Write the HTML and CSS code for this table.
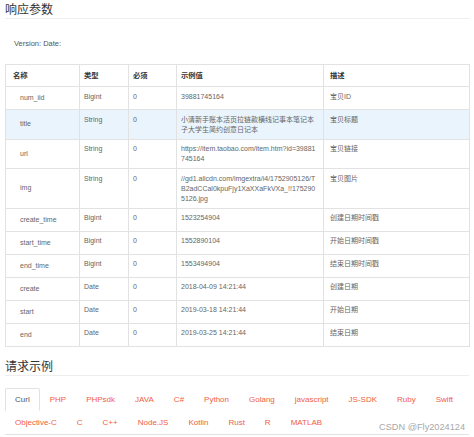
FILE: index.html
```html
<!DOCTYPE html>
<html lang="zh">
<head>
<meta charset="utf-8">
<title>响应参数</title>
<link rel="stylesheet" href="styles.css">
</head>
<body>
<div class="page">
  <h2 class="sec-title">响应参数</h2>
  <p class="version">Version: Date:</p>
  <table class="params">
    <colgroup>
      <col class="c-name"><col class="c-type"><col class="c-req"><col class="c-ex"><col class="c-desc">
    </colgroup>
    <thead>
      <tr><th>名称</th><th>类型</th><th>必须</th><th>示例值</th><th class="desc">描述</th></tr>
    </thead>
    <tbody>
      <tr><td class="name">num_iid</td><td>Bigint</td><td>0</td><td>39881745164</td><td class="desc">宝贝ID</td></tr>
      <tr class="hl"><td class="name">title</td><td>String</td><td>0</td><td>小清新手账本活页拉链款横线记事本笔记本子大学生简约创意日记本</td><td class="desc">宝贝标题</td></tr>
      <tr><td class="name">url</td><td>String</td><td>0</td><td>https://item.taobao.com/item.htm?id=39881745164</td><td class="desc">宝贝链接</td></tr>
      <tr><td class="name">img</td><td>String</td><td>0</td><td>//gd1.alicdn.com/imgextra/i4/1752905126/TB2adCCal0kpuFjy1XaXXaFkVXa_!!1752905126.jpg</td><td class="desc">宝贝图片</td></tr>
      <tr><td class="name">create_time</td><td>Bigint</td><td>0</td><td>1523254904</td><td class="desc">创建日期时间戳</td></tr>
      <tr><td class="name">start_time</td><td>Bigint</td><td>0</td><td>1552890104</td><td class="desc">开始日期时间戳</td></tr>
      <tr><td class="name">end_time</td><td>Bigint</td><td>0</td><td>1553494904</td><td class="desc">结束日期时间戳</td></tr>
      <tr><td class="name">create</td><td>Date</td><td>0</td><td>2018-04-09 14:21:44</td><td class="desc">创建日期</td></tr>
      <tr><td class="name">start</td><td>Date</td><td>0</td><td>2019-03-18 14:21:44</td><td class="desc">开始日期</td></tr>
      <tr><td class="name">end</td><td>Date</td><td>0</td><td>2019-03-25 14:21:44</td><td class="desc">结束日期</td></tr>
    </tbody>
  </table>
  <h2 class="sec-title sec-req">请求示例</h2>
  <ul class="tabs">
    <li class="tab active">Curl</li>
    <li class="tab">PHP</li>
    <li class="tab">PHPsdk</li>
    <li class="tab">JAVA</li>
    <li class="tab">C#</li>
    <li class="tab">Python</li>
    <li class="tab">Golang</li>
    <li class="tab">javascript</li>
    <li class="tab">JS-SDK</li>
    <li class="tab">Ruby</li>
    <li class="tab">Swift</li>
    <li class="tab">Objective-C</li>
    <li class="tab">C</li>
    <li class="tab">C++</li>
    <li class="tab">Node.JS</li>
    <li class="tab">Kotlin</li>
    <li class="tab">Rust</li>
    <li class="tab">R</li>
    <li class="tab">MATLAB</li>
  </ul>
  <div class="watermark">CSDN @Fly2024124</div>
</div>
</body>
</html>
```

FILE: styles.css
```css
* { box-sizing: border-box; }
html, body {
  margin: 0;
  padding: 0;
  background: #fff;
}
body {
  font-family: "Liberation Sans", "Noto Sans CJK SC", sans-serif;
  color: #555;
}
.page {
  position: relative;
  padding: 0 5px;
  height: 437px;
  overflow: hidden;
}
.sec-title {
  margin: 0;
  padding-top: 2px;
  font-size: 12px;
  line-height: 16px;
  font-weight: normal;
  color: #333;
  border-bottom: 1px solid #eee;
}
.sec-req {
  margin-top: 10px;
}
.version {
  margin: 20px 0 0 0;
  padding-left: 9px;
  font-size: 7.5px;
  line-height: 10px;
  color: #555;
}
.params {
  margin-top: 15px;
  width: 464px;
  border-collapse: collapse;
  table-layout: fixed;
  font-size: 7px;
  line-height: 10px;
}
.c-name { width: 74px; }
.c-type { width: 49px; }
.c-req { width: 48px; }
.c-ex { width: 147px; }
.c-desc { width: 146px; }
.params th,
.params td {
  border: 1px solid #e2e2e2;
  text-align: left;
  vertical-align: top;
  word-break: break-all;
}
.params th {
  padding: 5.5px 4px;
  font-size: 7.3px;
  font-weight: bold;
  color: #333;
}
.params th:first-child {
  padding-left: 7px;
}
.params td {
  padding: 4.5px 6px 4px 4px;
  color: #666;
}
.params td.name {
  vertical-align: middle;
  padding: 6px 4px 6px 14px;
}
.params .desc {
  padding-left: 6px;
}
.params tr.hl td {
  background: #eaf4fc;
}
.tabs {
  list-style: none;
  margin: 12px 0 0 0;
  padding: 0;
  display: flex;
  flex-wrap: wrap;
  border-bottom: 1px solid #e2e2e2;
  font-size: 8px;
}
.tab {
  height: 23px;
  line-height: 23px;
  padding: 0 10px;
  color: #f0603f;
}
.tab.active {
  color: #555;
  background: #fff;
  border: 1px solid #e2e2e2;
  border-bottom-color: transparent;
  border-radius: 2px 2px 0 0;
  padding: 0 9px;
  line-height: 21px;
}
.watermark {
  position: absolute;
  right: 9px;
  top: 421px;
  font-size: 9.2px;
  line-height: 12px;
  color: #a8a8a8;
}
```
